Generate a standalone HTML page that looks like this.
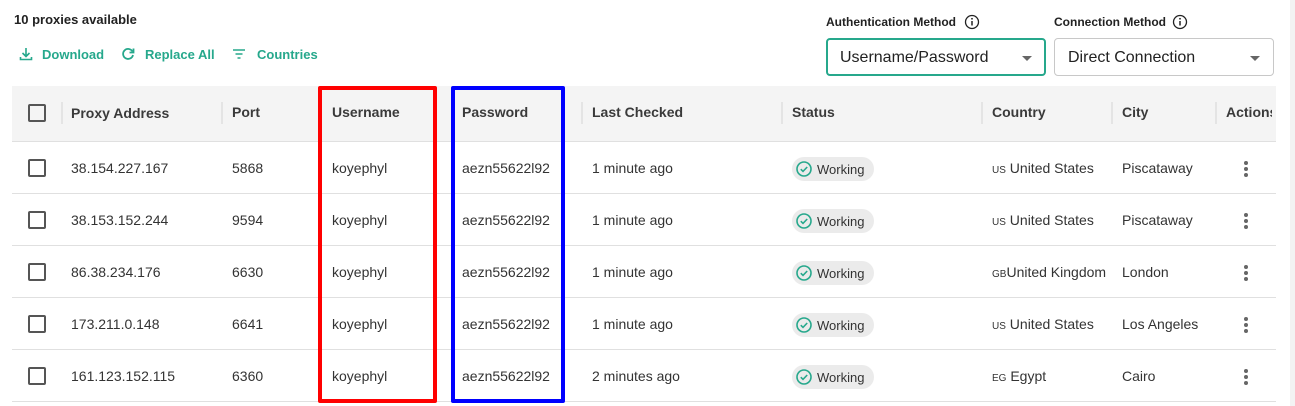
<!DOCTYPE html><html><head><style>
body{margin:0;width:1295px;height:406px;overflow:hidden;background:#fff;font-family:"Liberation Sans",Roboto,sans-serif;color:#222;position:relative}
.a{position:absolute;white-space:nowrap}
.t{font-size:14px;color:#333}
.h{font-size:14px;font-weight:bold;color:#3a3a3a}
.g{color:#26a88c;font-size:13px;font-weight:bold}
.cb{position:absolute;width:14px;height:14px;border:2px solid #555;border-radius:2px;left:28px}
.sep{position:absolute;width:2px;height:22px;background:#e4e4e4;top:102px}
.line{position:absolute;left:12px;width:1264px;height:1px;background:#e0e0e0}
.pill{position:absolute;left:792px;width:82px;height:24px;border-radius:12px;background:#ebebeb;font-size:13px;color:#333}
.dots{position:absolute;left:1244px;width:4px}
.dots i{display:block;width:4px;height:4px;border-radius:2px;background:#666;margin-bottom:2px}
.sel{position:absolute;top:38px;height:38px;border-radius:4px;box-sizing:border-box;font-size:16px;color:#222}
</style></head><body>
<div class="a" style="left:14px;top:12px;font-size:13px;font-weight:bold;color:#222">10 proxies available</div>
<svg class="a" style="left:19px;top:47px" width="14" height="14" viewBox="0 0 14 14" fill="none" stroke="#26a88c" stroke-width="1.6"><path d="M7 1v8M3.5 6L7 9.5 10.5 6M1.5 10v2.5h11V10"/></svg>
<div class="a g" style="left:42px;top:47px">Download</div>
<svg class="a" style="left:121px;top:47px" width="14" height="14" viewBox="0 0 14 14" fill="none" stroke="#26a88c" stroke-width="1.8"><path d="M11.5 4.5A5 5 0 1 0 12 8"/><path d="M12.5 1.5v4h-4" /></svg>
<div class="a g" style="left:145px;top:47px">Replace All</div>
<svg class="a" style="left:232px;top:48px" width="14" height="12" viewBox="0 0 14 12" stroke="#26a88c" stroke-width="1.6"><path d="M1 2h12M3.5 6h7M5.5 10h3"/></svg>
<div class="a g" style="left:257px;top:47px">Countries</div>

<div class="a" style="left:826px;top:15px;font-size:12px;font-weight:bold;color:#222">Authentication Method</div>
<svg class="a" style="left:964px;top:14px" width="16" height="16" viewBox="0 0 16 16"><circle cx="8" cy="8" r="6.5" fill="none" stroke="#222" stroke-width="1.3"/><path d="M8 7v4.5" stroke="#222" stroke-width="1.5"/><circle cx="8" cy="4.8" r="0.9" fill="#222"/></svg>
<div class="a" style="left:1054px;top:15px;font-size:12px;font-weight:bold;color:#222">Connection Method</div>
<svg class="a" style="left:1172px;top:14px" width="16" height="16" viewBox="0 0 16 16"><circle cx="8" cy="8" r="6.5" fill="none" stroke="#222" stroke-width="1.3"/><path d="M8 7v4.5" stroke="#222" stroke-width="1.5"/><circle cx="8" cy="4.8" r="0.9" fill="#222"/></svg>
<div class="sel" style="left:826px;width:220px;border:2px solid #26a88c"><span class="a" style="left:12px;top:9px">Username/Password</span><span class="a" style="left:194px;top:16px;border:5px solid transparent;border-top-color:#666;border-bottom:0"></span></div>
<div class="sel" style="left:1054px;width:220px;border:1px solid #c8c8c8"><span class="a" style="left:13px;top:10px">Direct Connection</span><span class="a" style="left:195px;top:17px;border:5px solid transparent;border-top-color:#666;border-bottom:0"></span></div>
<div class="a" style="left:1290px;top:0;width:5px;height:406px;background:#f3f3f3"></div>

<div class="a" style="left:12px;top:86px;width:1264px;height:55px;background:#f4f4f4"></div>
<div class="line" style="top:141px"></div>
<div class="cb" style="top:104px"></div>
<div class="sep" style="left:61px"></div><div class="sep" style="left:221px"></div><div class="sep" style="left:581px"></div><div class="sep" style="left:781px"></div><div class="sep" style="left:981px"></div><div class="sep" style="left:1111px"></div><div class="sep" style="left:1215px"></div>
<div class="a h" style="left:71px;top:105px">Proxy Address</div>
<div class="a h" style="left:232px;top:104px">Port</div>
<div class="a h" style="left:332px;top:104px">Username</div>
<div class="a h" style="left:462px;top:104px">Password</div>
<div class="a h" style="left:592px;top:104px">Last Checked</div>
<div class="a h" style="left:792px;top:104px">Status</div>
<div class="a h" style="left:992px;top:104px">Country</div>
<div class="a h" style="left:1122px;top:104px">City</div>
<div class="a h" style="left:1226px;top:104px;width:46px;overflow:hidden">Actions</div>

<div id="rows"></div>
<script>
var d=[["38.154.227.167","5868","1 minute ago","US","United States","Piscataway"],["38.153.152.244","9594","1 minute ago","US","United States","Piscataway"],["86.38.234.176","6630","1 minute ago","GB","United Kingdom","London"],["173.211.0.148","6641","1 minute ago","US","United States","Los Angeles"],["161.123.152.115","6360","2 minutes ago","EG","Egypt","Cairo"]];
var h="";d.forEach(function(r,i){var y=141+i*52,ty=y+19;
h+='<div class="cb" style="top:'+(y+18)+'px"></div>'+
'<div class="a t" style="left:71px;top:'+ty+'px">'+r[0]+'</div>'+
'<div class="a t" style="left:232px;top:'+ty+'px">'+r[1]+'</div>'+
'<div class="a t" style="left:332px;top:'+ty+'px">koyephyl</div>'+
'<div class="a t" style="left:462px;top:'+ty+'px">aezn55622l92</div>'+
'<div class="a t" style="left:592px;top:'+ty+'px">'+r[2]+'</div>'+
'<div class="pill" style="top:'+(y+16)+'px"><svg class="a" style="left:3px;top:3px" width="18" height="18" viewBox="0 0 18 18" fill="none" stroke="#26a88c" stroke-width="1.6"><circle cx="9" cy="9" r="7"/><path d="M5.8 9.2l2.2 2.2 4.2-4.4"/></svg><span class="a" style="left:25px;top:5px">Working</span></div>'+
'<div class="a t" style="left:992px;top:'+ty+'px"><span style="font-size:10px">'+r[3]+'</span>'+(r[3]=="GB"?'':' ')+r[4]+'</div>'+
'<div class="a t" style="left:1122px;top:'+ty+'px">'+r[5]+'</div>'+
'<div class="dots" style="top:'+(y+20)+'px"><i></i><i></i><i></i></div>'+
'<div class="line" style="top:'+(y+52)+'px"></div>';});
document.getElementById("rows").innerHTML=h;
</script>
<div class="a" style="left:318px;top:86px;width:111px;height:309px;border:4px solid #f00;border-radius:2px"></div>
<div class="a" style="left:451px;top:86px;width:106px;height:309px;border:4px solid #00f;border-radius:2px"></div>
</body></html>
